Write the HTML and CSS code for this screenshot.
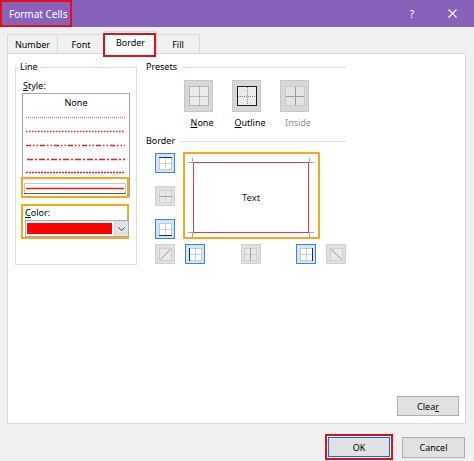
FILE: index.html
```html
<!DOCTYPE html>
<html>
<head>
<meta charset="utf-8">
<title>Format Cells</title>
<link rel="stylesheet" href="styles.css">
</head>
<body>
<header class="titlebar">
  <div class="title">Format Cells</div>
  <div class="controls">
    <span class="help">?</span>
    <svg class="close" width="9" height="9" viewBox="0 0 9 9"><path d="M0.5 0.5L8.5 8.5M8.5 0.5L0.5 8.5" stroke="#fff" stroke-width="1.1" fill="none"/></svg>
  </div>
</header>
<div class="content">
  <nav class="tabs">
    <div class="tab t-number">Number</div>
    <div class="tab t-font">Font</div>
    <div class="tab t-border active">Border</div>
    <div class="tab t-fill">Fill</div>
  </nav>
  <section class="panel">
    <div class="panel-main">
      <fieldset class="line-group">
        <legend>Line</legend>
        <div class="label"><u>S</u>tyle:</div>
        <div class="style-list">
          <div class="style-item none-item">None</div>
          <div class="style-item"><svg width="104" height="14"><line x1="3" y1="7.5" x2="102" y2="7.5" stroke="#f47a80" stroke-width="1.4" stroke-dasharray="1 1"/></svg></div>
          <div class="style-item"><svg width="104" height="14"><line x1="3" y1="7.5" x2="102" y2="7.5" stroke="#ec1c24" stroke-width="1.5" stroke-dasharray="1.5 1.5"/></svg></div>
          <div class="style-item"><svg width="104" height="14"><line x1="3" y1="7.5" x2="102" y2="7.5" stroke="#ec1c24" stroke-width="1.5" stroke-dasharray="5 2 1.5 2 1.5 2"/></svg></div>
          <div class="style-item"><svg width="104" height="14"><line x1="4" y1="7.5" x2="102" y2="7.5" stroke="#ec1c24" stroke-width="1.5" stroke-dasharray="6 2 2 2"/></svg></div>
          <div class="style-item short"><svg width="104" height="13"><line x1="3" y1="6.5" x2="102" y2="6.5" stroke="#ec1c24" stroke-width="1.5" stroke-dasharray="2 1"/></svg></div>
          <div class="style-item selected"><svg width="104" height="17"><rect x="1.5" y="4.5" width="101" height="10" fill="none" stroke="#8c8c8c" stroke-dasharray="1 1"/><line x1="3" y1="9.5" x2="101" y2="9.5" stroke="#ec1c24" stroke-width="1.3"/><line x1="1" y1="14.5" x2="103" y2="14.5" stroke="#555"/></svg></div>
        </div>
        <div class="color-box">
          <div class="label"><u>C</u>olor:</div>
          <div class="combo">
            <span class="swatch"></span>
            <span class="arrow"><svg width="7" height="4" viewBox="0 0 7 4"><path d="M0.5 0.5L3.5 3.5L6.5 0.5" stroke="#444" fill="none"/></svg></span>
          </div>
        </div>
      </fieldset>

      <div class="right-col">
        <div class="section-head"><span>Presets</span><span class="rule"></span></div>
        <div class="presets">
          <div class="preset">
            <div class="pbtn"><svg width="22" height="22" viewBox="0 0 22 22"><rect x="1.5" y="1.5" width="19" height="19" fill="#ebebeb" stroke="#8a8a8a" stroke-dasharray="1 1"/><path d="M11.5 1.5V20.5M1.5 11.5H20.5" stroke="#8a8a8a" stroke-dasharray="1 1" fill="none"/></svg></div>
            <div class="plabel"><u>N</u>one</div>
          </div>
          <div class="preset">
            <div class="pbtn"><svg width="22" height="22" viewBox="0 0 22 22"><rect x="1.5" y="1.5" width="19" height="19" fill="#ebebeb" stroke="#1e1e1e"/><path d="M11.5 2V20M2 11.5H20" stroke="#8a8a8a" stroke-dasharray="1 1" fill="none"/></svg></div>
            <div class="plabel"><u>O</u>utline</div>
          </div>
          <div class="preset">
            <div class="pbtn"><svg width="22" height="22" viewBox="0 0 22 22"><rect x="1.5" y="1.5" width="19" height="19" fill="#e3e3e3" stroke="#b5b5b5" stroke-dasharray="1 1"/><path d="M11.5 2V20M2 11.5H20" stroke="#9a9a9a" fill="none"/></svg></div>
            <div class="plabel disabled">Inside</div>
          </div>
        </div>

        <div class="section-head border-head"><span>Border</span><span class="rule"></span></div>
        <div class="border-grid">
          <div class="side-col">
            <div class="bb blue"><svg width="15" height="15" viewBox="0 0 15 15"><rect x="1.5" y="1.5" width="12" height="12" fill="#fff" stroke="#9aa4ad" stroke-dasharray="1 1"/><path d="M7.5 1.5V13.5M1.5 7.5H13.5" stroke="#9aa4ad" stroke-dasharray="1 1"/><path d="M1 1.5H14" stroke="#2b2b2b"/></svg></div>
            <div class="bb gray"><svg width="15" height="15" viewBox="0 0 15 15"><rect x="1.5" y="1.5" width="12" height="12" fill="#e8e8e8" stroke="#c0c0c0" stroke-dasharray="1 1"/><path d="M7.5 1.5V13.5" stroke="#c0c0c0" stroke-dasharray="1 1"/><path d="M1 7.5H14" stroke="#a0a0a0"/></svg></div>
            <div class="bb blue"><svg width="15" height="15" viewBox="0 0 15 15"><rect x="1.5" y="1.5" width="12" height="12" fill="#fff" stroke="#9aa4ad" stroke-dasharray="1 1"/><path d="M7.5 1.5V13.5M1.5 7.5H13.5" stroke="#9aa4ad" stroke-dasharray="1 1"/><path d="M1 13.5H14" stroke="#2b2b2b"/></svg></div>
          </div>
          <div class="preview"><div class="cell"><span class="cell-text">Text</span></div></div>
          <div class="empty"></div>

          <div class="bb gray"><svg width="15" height="15" viewBox="0 0 15 15"><rect x="1.5" y="1.5" width="12" height="12" fill="#e8e8e8" stroke="#cfcfcf"/><path d="M2.5 12.5L12.5 2.5" stroke="#9a9a9a"/></svg></div>
          <div class="bottom-row">
            <div class="bb blue"><svg width="15" height="15" viewBox="0 0 15 15"><rect x="1.5" y="1.5" width="12" height="12" fill="#fff" stroke="#9aa4ad" stroke-dasharray="1 1"/><path d="M7.5 1.5V13.5M1.5 7.5H13.5" stroke="#9aa4ad" stroke-dasharray="1 1"/><path d="M1.5 1V14" stroke="#2b2b2b"/></svg></div>
            <div class="bb gray"><svg width="15" height="15" viewBox="0 0 15 15"><rect x="1.5" y="1.5" width="12" height="12" fill="#e8e8e8" stroke="#c0c0c0" stroke-dasharray="1 1"/><path d="M1.5 7.5H13.5" stroke="#c0c0c0" stroke-dasharray="1 1"/><path d="M7.5 1V14" stroke="#a0a0a0"/></svg></div>
            <div class="bb blue"><svg width="15" height="15" viewBox="0 0 15 15"><rect x="1.5" y="1.5" width="12" height="12" fill="#fff" stroke="#9aa4ad" stroke-dasharray="1 1"/><path d="M7.5 1.5V13.5M1.5 7.5H13.5" stroke="#9aa4ad" stroke-dasharray="1 1"/><path d="M13.5 1V14" stroke="#2b2b2b"/></svg></div>
          </div>
          <div class="bb gray"><svg width="15" height="15" viewBox="0 0 15 15"><rect x="1.5" y="1.5" width="12" height="12" fill="#e8e8e8" stroke="#cfcfcf"/><path d="M2.5 2.5L12.5 12.5" stroke="#9a9a9a"/></svg></div>
        </div>
      </div>
    </div>
    <div class="panel-foot"><button class="btn clear">Clea<u>r</u></button></div>
  </section>
  <footer class="footer">
    <div class="ok-ring"><button class="btn ok">OK</button></div>
    <button class="btn cancel">Cancel</button>
  </footer>
</div>
</body>
</html>
```

FILE: styles.css
```css
* { box-sizing: border-box; }
html, body { margin: 0; padding: 0; }
body {
  width: 474px;
  height: 461px;
  overflow: hidden;
  background: #f0f0f0;
  font-family: "Noto Sans", "Open Sans", sans-serif;
  font-size: 9px;
  color: #000;
}
u { text-decoration: underline; text-underline-offset: 1px; }

/* title bar */
.titlebar {
  height: 27px;
  background: #8761ba;
  display: flex;
  justify-content: space-between;
  align-items: stretch;
  color: #fff;
}
.title {
  width: 72px;
  border: 2px solid #e3101c;
  padding-left: 7px;
  display: flex;
  align-items: center;
  font-size: 10px;
  white-space: nowrap;
}
.controls {
  display: flex;
  align-items: center;
  gap: 31px;
  padding-right: 17px;
}
.help { width: 10px; text-align: center; font-size: 10px; }
.close { display: block; }

/* tabs */
.content { padding: 4px 0 0 7px; }
.tabs {
  display: flex;
  align-items: flex-end;
  height: 22px;
  position: relative;
  z-index: 1;
}
.tab {
  height: 19px;
  border: 1px solid #d9d9d9;
  border-bottom: none;
  background: #f0f0f0;
  display: flex;
  align-items: center;
  justify-content: center;
  margin-left: -1px;
}
.t-number { width: 51px; margin-left: 0; }
.t-font { width: 48px; }
.t-border { width: 53px; }
.t-fill { width: 44px; }
.tab.active {
  height: 23px;
  background: #fff;
  margin-bottom: -1px;
  position: relative;
  padding-bottom: 2px;
}
.tab.active::after {
  content: "";
  position: absolute;
  left: -2px;
  right: 0;
  top: 1px;
  bottom: -3px;
  border: 2px solid #e3101c;
}

/* panel */
.panel {
  width: 459px;
  height: 371px;
  background: #fff;
  border: 1px solid #d9d9d9;
  display: flex;
  flex-direction: column;
}
.panel-main {
  display: flex;
  gap: 9px;
  padding: 6px 0 0 7px;
}

/* line group */
.line-group {
  width: 122px;
  margin: 0;
  padding: 0 6px 25px 6px;
  border: 1px solid #dcdcdc;
  min-width: 0;
}
.line-group legend {
  padding: 0 2px;
  margin-left: -4px;
  line-height: 14px;
}
.label { line-height: 14px; padding-left: 1px; }
.line-group > .label { margin-top: 5px; }
.style-list {
  width: 108px;
  height: 104px;
  border: 1px solid #a3a3a3;
  display: flex;
  flex-direction: column;
}
.style-item { height: 14px; display: flex; }
.style-item svg { display: block; }
.none-item {
  height: 16px;
  align-items: center;
  justify-content: center;
}
.style-item.short { height: 13px; }
.style-item.selected {
  height: 17px;
  width: 104px;
  outline: 2px solid #f4a81d;
}
.color-box {
  margin-top: 7px;
  margin-left: -1px;
  width: 108px;
  height: 35px;
  border: 2px solid #f4a81d;
  padding-left: 1px;
}
.combo {
  margin-left: 1px;
  width: 104px;
  height: 17px;
  border: 1px solid #ababab;
  background: #fff;
  display: flex;
}
.swatch {
  width: 86px;
  height: 11px;
  margin: 2px 0 0 1px;
  background: #ff0000;
}
.arrow {
  margin-left: 2px;
  width: 14px;
  height: 15px;
  background: #e1e1e1;
  border-left: 1px solid #d0d0d0;
  display: flex;
  align-items: center;
  justify-content: center;
}
.arrow svg { display: block; }

/* right column */
.right-col { width: 200px; }
.section-head {
  display: flex;
  align-items: center;
  height: 14px;
  line-height: 14px;
}
.rule {
  flex: 1;
  height: 1px;
  background: #dcdcdc;
  margin-left: 5px;
}
.presets {
  display: flex;
  gap: 19px;
  padding-left: 38px;
  margin-top: 6px;
}
.preset {
  width: 29px;
  display: flex;
  flex-direction: column;
  align-items: center;
}
.pbtn {
  width: 29px;
  height: 32px;
  background: #d7d7d7;
  border: 1px solid #c7c7c7;
  display: flex;
  align-items: center;
  justify-content: center;
}
.pbtn svg { display: block; }
.plabel {
  margin-top: 4px;
  line-height: 14px;
  white-space: nowrap;
  padding-left: 7px;
}
.plabel.disabled { color: #8d8d8d; }
.border-head { margin-top: 4px; }

.border-grid {
  margin-top: 4px;
  padding-left: 9px;
  display: grid;
  grid-template-columns: 28px 143px 20px;
  grid-template-rows: 87px 20px;
  row-gap: 5px;
}
.side-col {
  display: flex;
  flex-direction: column;
  justify-content: space-between;
  padding-top: 1px;
}
.bb {
  width: 20px;
  height: 20px;
  border: 1px solid #cdcdcd;
  display: flex;
  align-items: center;
  justify-content: center;
}
.bb svg { display: block; }
.bb.blue { background: #cfe5f8; border-color: #3f86d2; }
.bb.gray { background: #e0e0e0; border-color: #cfcfcf; }

.preview {
  width: 137px;
  height: 87px;
  border: 2px solid #f4a81d;
  background: #fff;
  padding: 8px 9px 4px 8px;
}
.cell {
  position: relative;
  z-index: 0;
  height: 100%;
  display: flex;
  align-items: center;
  justify-content: center;
  color: #222;
  font-size: 9.5px;
}
.cell::before {
  content: "";
  position: absolute;
  z-index: -2;
  top: -4px;
  bottom: -4px;
  left: -1px;
  right: -1px;
  border-left: 1px solid #a9a9a9;
  border-right: 1px solid #a9a9a9;
}
.cell::after {
  content: "";
  position: absolute;
  z-index: -1;
  inset: 0 -5px;
  border-top: 1px solid #a9a9a9;
  border-bottom: 1px solid #a9a9a9;
  box-shadow: inset 5px 0 0 #fff, inset -5px 0 0 #fff;
}
.cell-text {
  position: absolute;
  inset: 0;
  display: flex;
  align-items: center;
  justify-content: center;
  border: 1px solid #ea3a41;
}
.bottom-row {
  width: 137px;
  display: flex;
  justify-content: space-between;
  padding: 0 4px 0 2px;
}

/* buttons */
.panel-foot {
  margin-top: auto;
  display: flex;
  justify-content: flex-end;
  padding: 0 6px 7px 0;
}
.btn {
  font-family: "Noto Sans", "Open Sans", sans-serif;
  font-size: 9px;
  color: #000;
  background: #e1e1e1;
  border: 1px solid #adadad;
  padding: 0;
  margin: 0;
  width: 62px;
  height: 20px;
}
.footer {
  display: flex;
  justify-content: flex-end;
  align-items: center;
  gap: 9px;
  margin-top: 10px;
  padding-right: 9px;
}
.ok-ring {
  border: 2px solid #e3101c;
  padding: 1px;
  display: flex;
}
.btn.ok { border-color: #0078d7; }
.btn.cancel { width: 63px; height: 21px; }
```
